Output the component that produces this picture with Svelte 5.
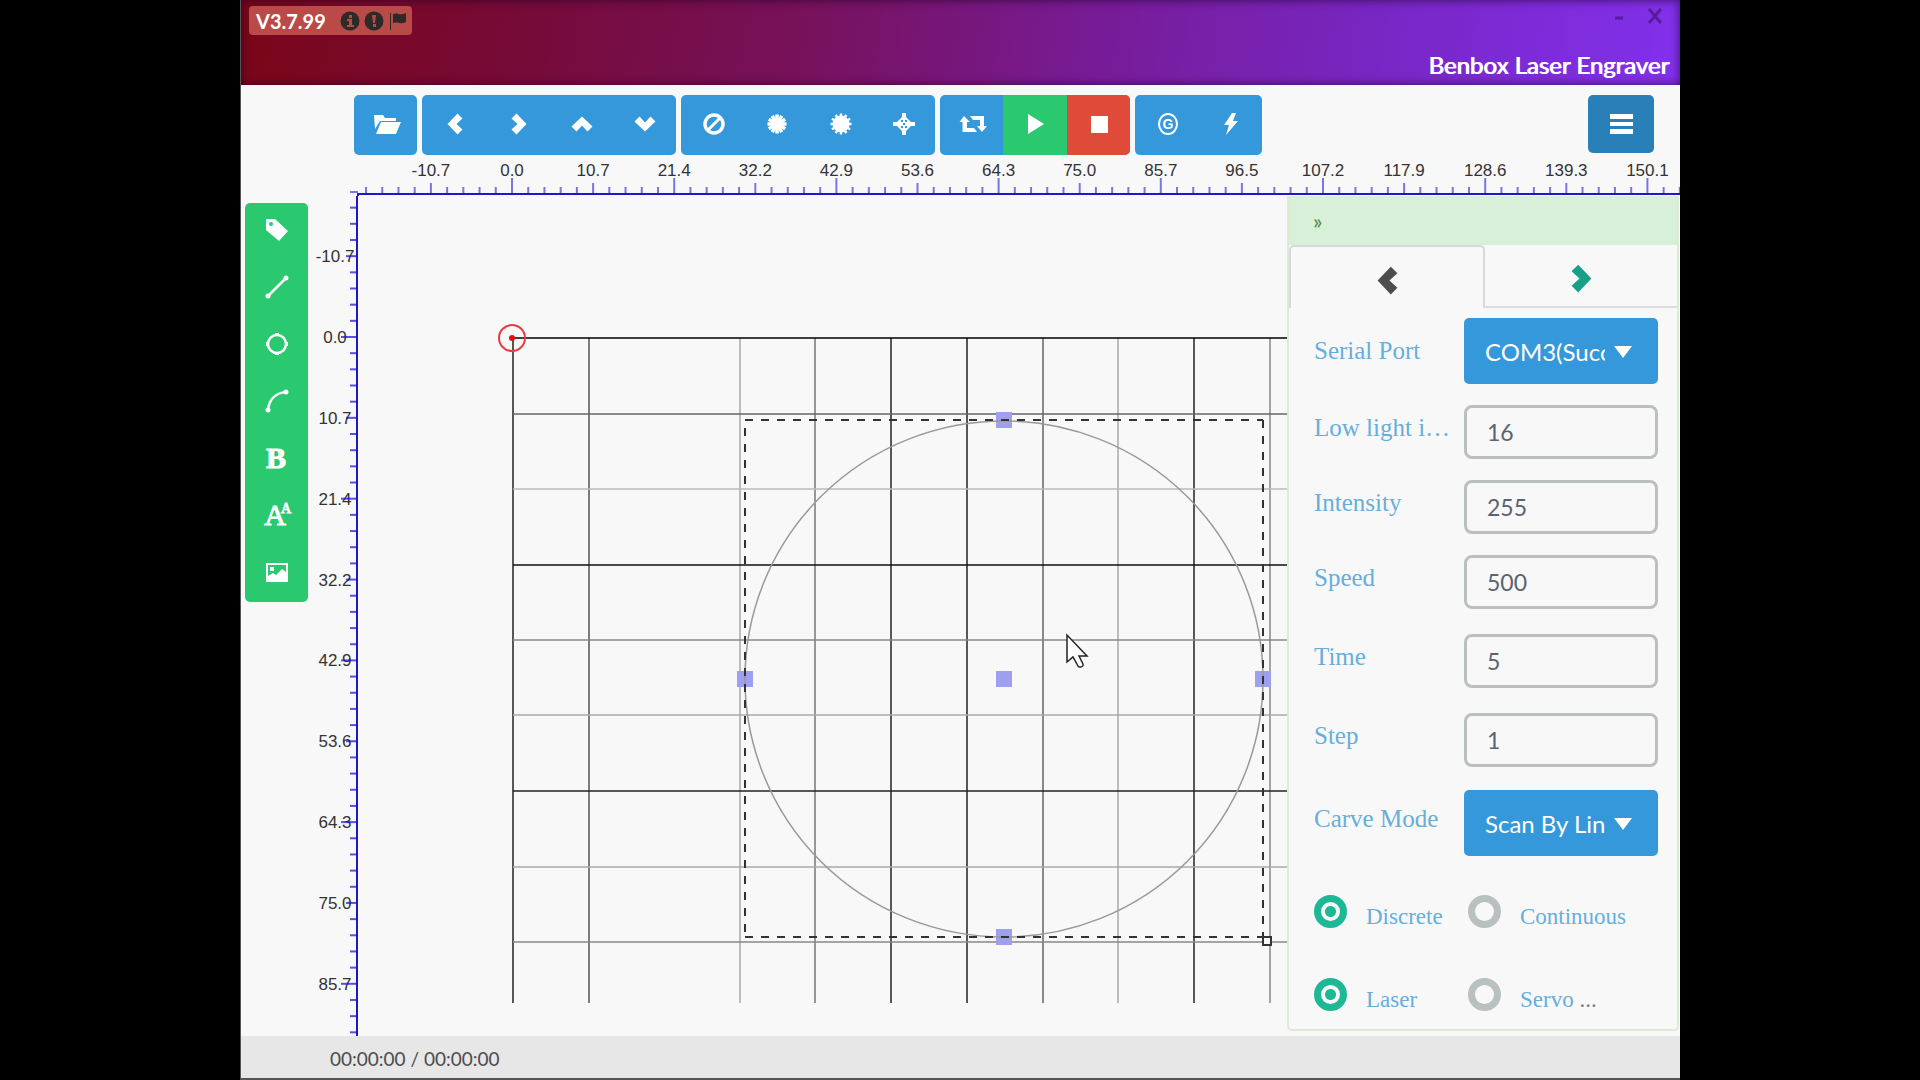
<script lang="ts">
	interface Tool {
		icon: string;
		label: string;
		tone?: string;
	}

	interface Field {
		id: string;
		label: string;
		value: string;
		spaced?: boolean;
	}

	const icons: Record<string, string> = {
		folder: 'M1 5h9l2 3h11v3H7L2 19zM8 12h20l-5 12H3z',
		left: 'M6.5 14 16.5 3.5 21.5 8.5 15.5 14 21.5 19.5 16.5 24.5z',
		right: 'M21.5 14 11.5 3.5 6.5 8.5 12.5 14 6.5 19.5 11.5 24.5z',
		up: 'M14 6.5 24.5 16.5 19.5 21.5 14 15.5 8.5 21.5 3.5 16.5z',
		down: 'M14 21.5 24.5 11.5 19.5 6.5 14 12.5 8.5 6.5 3.5 11.5z',
		repeat: 'M5 6 .5 12h3v10H18l-3-4H8v-6h3zM11 6h14v10h3l-5 6-5-6h3v-6h-7z',
		play: 'M6 4v20l16-10z',
		stop: 'M6 6h17v17H6z',
		bolt: 'M15 3 7 15h5l-3 10 12-14h-5l3-8z',
		menu: 'M3 4h23v5H3zM3 12h23v4H3zM3 19h23v5H3z',
		tag: 'M3 3h9l13 12-9 10L3 14zM6 8a2 2 0 1 0 4 0 2 2 0 1 0-4 0z',
		image: 'M3 5h22v19H3zM5 7v11l5-3 3 2 6-6 4 3V7zM7 9h4v4H7z'
	};

	const groups: Tool[][] = [
		[{ icon: 'folder', label: 'Open' }],
		[
			{ icon: 'left', label: 'Move left' },
			{ icon: 'right', label: 'Move right' },
			{ icon: 'up', label: 'Move up' },
			{ icon: 'down', label: 'Move down' }
		],
		[
			{ icon: 'ban', label: 'Laser off' },
			{ icon: 'asterisk', label: 'Low light' },
			{ icon: 'sun', label: 'Full light' },
			{ icon: 'move', label: 'Preview position' }
		],
		[
			{ icon: 'repeat', label: 'Repeat' },
			{ icon: 'play', label: 'Start', tone: 'green' },
			{ icon: 'stop', label: 'Stop', tone: 'red' }
		],
		[
			{ icon: 'gcode', label: 'G-code' },
			{ icon: 'bolt', label: 'Firmware' }
		]
	];

	const shapes: Tool[] = [
		{ icon: 'tag', label: 'Select' },
		{ icon: 'line', label: 'Line' },
		{ icon: 'circle', label: 'Circle' },
		{ icon: 'arc', label: 'Arc' },
		{ icon: 'bold', label: 'Bold text' },
		{ icon: 'font', label: 'Text' },
		{ icon: 'image', label: 'Image' }
	];

	const spokes = [0, 30, 60, 90, 120, 150];

	// ruler marks, counted from the origin; a label every five ticks
	const TICK_X = 16.22;
	const TICK_Y = 16.17;
	const labels = ['-10.7', '0.0', '10.7', '21.4', '32.2', '42.9', '53.6', '64.3', '75.0', '85.7', '96.5', '107.2', '117.9', '128.6', '139.3', '150.1'];
	const marks = Array.from({ length: 82 }, (_, i) => i - 9);

	const tickSize = (n: number) => (n % 10 === 0 ? 16 : n % 5 === 0 ? 11 : 7);

	const columns = [
		[1, '#222'], [77, '#555'], [228, '#aaa'], [303, '#777'], [379, '#222'],
		[455, '#222'], [531, '#666'], [606, '#aaa'], [682, '#222'], [758, '#888']
	] as const;

	const rows = [
		[0, '#000'], [76, '#666'], [151, '#bbb'], [227, '#111'], [302, '#888'],
		[377, '#aaa'], [453, '#222'], [529, '#aaa'], [604, '#888']
	] as const;

	const handles = [[492, 82], [233, 341], [492, 341], [751, 341], [492, 599]];

	let port = $state('COM3(Success)');
	let carveMode = $state('Scan By Line');
	let motion = $state('discrete');
	let head = $state('laser');

	let fields = $state<Field[]>([
		{ id: 'low-light', label: 'Low light intensity', value: '16' },
		{ id: 'intensity', label: 'Intensity', value: '255' },
		{ id: 'speed', label: 'Speed', value: '500' },
		{ id: 'time', label: 'Time', value: '5', spaced: true },
		{ id: 'step', label: 'Step', value: '1', spaced: true }
	]);
</script>

{#snippet icon(name: string)}
	<svg class="icon" viewBox="0 0 28 28" aria-hidden="true">
		{#if name === 'ban'}
			<circle class="line" cx="14" cy="14" r="9" stroke-width="3.5" />
			<path class="line" d="M8 20 20 8" stroke-width="3" />
		{:else if name === 'asterisk'}
			{#each spokes as angle}
				<path class="line" d="M14 4.5v19" stroke-width="3.5" transform="rotate({angle} 14 14)" />
			{/each}
		{:else if name === 'sun'}
			<circle cx="14" cy="14" r="8.5" />
			{#each spokes as angle}
				<path class="line" d="M14 3.5v21" stroke-width="2.5" transform="rotate({angle} 14 14)" />
			{/each}
		{:else if name === 'move'}
			<path fill-rule="evenodd" d="M12 3h4v4l5 5h4v4h-4l-5 5v4h-4v-4l-5-5H3v-4h4l5-5zM11 10v2h2v-2zM15 10v2h2v-2zM11 16v2h2v-2zM15 16v2h2v-2zM13 13v2h2v-2z" />
		{:else if name === 'gcode'}
			<ellipse class="line" cx="14" cy="14" rx="9" ry="10" stroke-width="2" />
			<text class="g" x="14" y="19" text-anchor="middle">G</text>
		{:else if name === 'line'}
			<path class="line" d="M4 24 24 4" stroke-width="2.5" />
			<circle cx="5" cy="23" r="2.5" />
			<circle cx="23" cy="5" r="2.5" />
		{:else if name === 'circle'}
			<circle class="line" cx="14" cy="14" r="9" stroke-width="2.5" />
			<path d="M12 3h4v3h-4zM12 22h4v3h-4zM3 12h3v4H3zM22 12h3v4h-3z" />
		{:else if name === 'arc'}
			<path class="line" d="M5 23C6 13 12 6 23 5" stroke-width="2.5" />
			<circle cx="5" cy="23" r="2.5" />
			<circle cx="23" cy="5" r="2.5" />
		{:else if name === 'bold'}
			<text class="serif bold" x="13" y="24" text-anchor="middle">B</text>
		{:else if name === 'font'}
			<text class="serif" x="12" y="24" text-anchor="middle">A</text>
			<text class="serif small" x="23" y="12" text-anchor="middle">A</text>
		{:else}
			<path fill-rule="evenodd" d={icons[name]} />
		{/if}
	</svg>
{/snippet}

<div class="app">
	<header>
		<div class="version">
			<strong>V3.7.99</strong>
			<svg width="60" height="20" viewBox="0 0 60 20" aria-hidden="true">
				<circle cx="10" cy="10" r="9.5" />
				<path class="cut" d="M9 4h3v3H9zM7 8h5v6h2v2H7v-2h2v-4H7z" />
				<circle cx="34" cy="10" r="9.5" />
				<path class="cut" d="M32 4h4l-1 8h-2zM33 13h3v3h-3z" />
				<path d="M50 2h1v17h-1zM53 3c5-2 7 2 13-1v9c-5 3-8-1-13 1z" />
			</svg>
		</div>
		<div class="brand">
			<div class="window-buttons">
				<button aria-label="Minimize"><svg width="16" height="16"><path d="M4 10h8" /></svg></button>
				<button aria-label="Close"><svg width="16" height="16"><path d="M2 1 14 15M14 1 2 15" /></svg></button>
			</div>
			<h1>Benbox Laser Engraver</h1>
		</div>
	</header>

	<nav class="toolbar">
		<div class="groups">
			{#each groups as group}
				<div class="group" style:flex-grow={group.length}>
					{#each group as tool}
						<button class={tool.tone} aria-label={tool.label}>{@render icon(tool.icon)}</button>
					{/each}
				</div>
			{/each}
		</div>
		<button class="menu" aria-label="Menu">{@render icon('menu')}</button>
	</nav>

	<svg class="ruler" aria-hidden="true">
		<path class="axis" d="M116 34h2000M117 33v4" />
		<path class="tick" d="M109 32h8" />
		<g transform="translate(271 0)">
			{#each marks as n}
				<path class="tick" d="M{n * TICK_X} {34 - tickSize(n)}V34" />
			{/each}
			{#each labels as text, i}
				<text x={(i - 1) * TICK_X * 5} y="16">{text}</text>
			{/each}
		</g>
	</svg>

	<main>
		<div class="shapes">
			{#each shapes as tool}
				<button aria-label={tool.label}>{@render icon(tool.icon)}</button>
			{/each}
		</div>

		<svg class="canvas" role="img" aria-label="Drawing area">
			<g transform="translate(202 142)">
				{#each labels.slice(0, 10) as text, i}
					<text x="-177" y={(i - 1) * TICK_Y * 5 + 5}>{text}</text>
				{/each}
				<path class="axis" d="M-155-142V698" />
				{#each marks.slice(1, 53) as n}
					<path class="tick" d="M-155 {n * TICK_Y - 1}h{-tickSize(n)}" />
				{/each}

				{#each columns as [x, color]}
					<path class="grid" d="M{x} 0V665" stroke={color} />
				{/each}
				{#each rows as [y, color]}
					<path class="grid" d="M1 {y}H1400" stroke={color} />
				{/each}

				<circle class="origin" r="13" />
				<circle class="dot" r="3" />

				{#each handles as [x, y]}
					<rect class="handle" x={x - 8} y={y - 8} width="16" height="16" />
				{/each}
				<ellipse class="shape" cx="492" cy="341" rx="259" ry="258" />
				<path class="selection" d="M233 82H751M233 599H751M233 90V599M751 82V599" />
				<rect class="resize" x="751" y="599" width="8" height="8" />

				<path class="cursor" d="M555 297v27l6-5 5 9c1 2 6 1 5-2l-4-8h8z" />
			</g>
		</svg>

		<aside>
			<div class="panel-head"><button aria-label="Collapse panel">»</button></div>
			<div class="tabs">
				<button class="active" aria-label="Previous">{@render icon('left')}</button>
				<button aria-label="Next">{@render icon('right')}</button>
			</div>
			<form>
				<div class="row">
					<label class="centered" for="port">Serial Port</label>
					<div class="select">
						<select id="port" bind:value={port}>
							<option>COM3(Success)</option>
						</select>
						<svg width="18" height="12"><path d="M0 0h18L9 12z" /></svg>
					</div>
				</div>
				{#each fields as field}
					<div class={['row', field.spaced && 'spaced']}>
						<label for={field.id}>{field.label}</label>
						<input id={field.id} type="text" bind:value={field.value} />
					</div>
				{/each}
				<div class="row carve">
					<label for="carve">Carve Mode</label>
					<div class="select">
						<select id="carve" bind:value={carveMode}>
							<option>Scan By Line</option>
						</select>
						<svg width="18" height="12"><path d="M0 0h18L9 12z" /></svg>
					</div>
				</div>
				<div class="radios">
					<label><input type="radio" value="discrete" bind:group={motion} /><span>Discrete</span></label>
					<label><input type="radio" value="continuous" bind:group={motion} /><span>Continuous</span></label>
					<label><input type="radio" value="laser" bind:group={head} /><span>Laser</span></label>
					<label><input type="radio" value="servo" bind:group={head} /><span>Servo <i>...</i></span></label>
				</div>
			</form>
		</aside>
	</main>

	<footer>00:00:00 / 00:00:00</footer>
</div>

<style>
	:global(body) {
		background: #000;
	}

	.app {
		box-sizing: border-box;
		width: 75%;
		min-height: 100vh;
		margin: 0 auto;
		display: flex;
		flex-direction: column;
		background: #f8f8f8;
		border-left: 1px solid #555;
		border-bottom: 2px solid #555;
		font-family: Lato, "Liberation Sans", sans-serif;
	}

	button {
		padding: 0;
		border: 0;
		background: none;
		color: inherit;
		font: inherit;
		cursor: pointer;
	}

	header {
		display: flex;
		justify-content: space-between;
		align-items: flex-start;
		height: 85px;
		background: linear-gradient(100deg, #7b0618 0%, #760a35 18%, #771158 38%, #771c98 60%, #7826c2 78%, #8230ec 100%);
		box-shadow: inset 0 0 10px rgba(30, 0, 40, 0.7);
	}

	.version {
		display: flex;
		align-items: center;
		gap: 14px;
		box-sizing: border-box;
		height: 29px;
		margin: 6px 0 0 8px;
		padding: 0 12px 0 7px;
		border-radius: 4px;
		background: #b94a48;
		color: #fff;
		font-size: 20px;
		line-height: 28px;
	}

	.version svg {
		fill: #2d2a2a;
		overflow: visible;
	}

	.version .cut {
		fill: #b94a48;
	}

	.brand {
		display: flex;
		flex-direction: column;
		align-items: flex-end;
		gap: 26px;
		padding: 8px 11px 0 0;
	}

	.window-buttons {
		display: flex;
		gap: 20px;
		padding-right: 6px;
	}

	.window-buttons svg {
		display: block;
		stroke: #561d9c;
		stroke-width: 3;
	}

	h1 {
		margin: 0;
		color: #fff;
		font-size: 24px;
		font-weight: 400;
		line-height: 30px;
		text-shadow: 1px 0 0 #fff;
	}

	.toolbar {
		display: flex;
		justify-content: space-between;
		height: 65px;
		padding: 10px 26px 0 113px;
	}

	.groups {
		display: flex;
		flex: 0 1 908px;
		gap: 5px;
	}

	.group {
		display: flex;
		flex-basis: 0;
		height: 60px;
		border-radius: 5px;
		overflow: hidden;
		background: #3498db;
	}

	.group button {
		flex: 1;
		padding: 0 0 2px 2px;
	}

	.group .green {
		background: #2ac970;
	}

	.group .red {
		background: #e04a39;
	}

	.menu {
		width: 66px;
		height: 58px;
		border-radius: 5px;
		background: #2980b9;
	}

	.toolbar button,
	.shapes button {
		display: flex;
		align-items: center;
		justify-content: center;
	}

	.icon {
		width: 28px;
		height: 28px;
		fill: #fff;
		overflow: visible;
	}

	.icon .line {
		fill: none;
		stroke: #fff;
	}

	.icon .g {
		font: bold 14px "Liberation Sans", sans-serif;
	}

	.icon .serif {
		font: 30px "Liberation Serif", serif;
		stroke: #fff;
	}

	.icon .bold {
		font-weight: bold;
	}

	.icon .small {
		font-size: 14px;
	}

	.ruler {
		display: block;
		width: 100%;
		height: 36px;
	}

	.ruler text,
	.canvas text {
		fill: #333;
		font: 17px "Liberation Sans", sans-serif;
		text-anchor: middle;
	}

	.axis {
		fill: none;
		stroke: #2018c8;
		stroke-width: 2;
	}

	.tick {
		stroke: #1408d8;
		stroke-opacity: 0.55;
		stroke-width: 2;
	}

	.canvas .tick {
		stroke-opacity: 0.7;
	}

	main {
		flex: 1;
		display: flex;
	}

	.shapes {
		display: flex;
		flex-direction: column;
		align-self: flex-start;
		width: 63px;
		margin: 7px 2px 0 4px;
		border-radius: 5px;
		background: #2ac970;
	}

	.shapes button {
		height: 57px;
		padding-bottom: 4px;
	}

	.canvas {
		flex: 1;
		min-width: 0;
	}

	.grid {
		stroke-width: 1.5;
	}

	.origin {
		fill: none;
		stroke: #e83c3c;
		stroke-width: 2;
	}

	.dot {
		fill: #e01010;
	}

	.shape {
		fill: none;
		stroke: #999;
		stroke-width: 1.5;
	}

	.selection {
		fill: none;
		stroke: #333;
		stroke-width: 2;
		stroke-dasharray: 8 8;
	}

	.handle {
		fill: #9f9ff0;
	}

	.resize {
		fill: #f8f8f8;
		stroke: #333;
		stroke-width: 2;
	}

	.cursor {
		fill: #fff;
		stroke: #222;
		stroke-width: 1.5;
	}

	aside {
		display: flex;
		flex-direction: column;
		box-sizing: border-box;
		width: 392px;
		margin: 0 1px 5px 0;
		border: 2px solid #dcebd6;
		border-top: 0;
		border-radius: 0 0 5px 5px;
	}

	.panel-head {
		height: 49px;
		padding-left: 24px;
		background: #d9f0d8;
		color: #4f8a4c;
		font-size: 22px;
		line-height: 49px;
	}

	.tabs {
		display: flex;
		height: 63px;
	}

	.tabs button {
		flex: 1;
		border-bottom: 2px solid #ddd;
	}

	.tabs .active {
		border: 2px solid #d5dad5;
		border-bottom: 0;
		border-radius: 5px 5px 0 0;
	}

	.tabs .icon {
		display: block;
		width: 37px;
		height: 37px;
		margin: 6px auto 0;
		fill: #16a085;
	}

	.tabs .active .icon {
		fill: #4d4d4d;
	}

	form {
		display: flex;
		flex-direction: column;
		gap: 21px;
		padding: 10px 19px 0 25px;
	}

	.row {
		display: grid;
		grid-template-columns: minmax(0, 1fr) 194px;
		column-gap: 12px;
		align-items: center;
	}

	.spaced {
		margin-top: 4px;
	}

	.carve {
		margin-top: 2px;
	}

	.row label {
		padding-bottom: 8px;
		overflow: hidden;
		color: #66aede;
		font: 25px/30px "Liberation Serif", serif;
		text-overflow: ellipsis;
		white-space: nowrap;
	}

	.row .centered {
		padding-bottom: 0;
	}

	.row input {
		box-sizing: border-box;
		width: 100%;
		height: 54px;
		padding: 0 20px;
		border: 3px solid #b9c0be;
		border-radius: 8px;
		background: #f8f8f8;
		color: #5a6372;
		font: 23px Lato, sans-serif;
	}

	.select {
		display: grid;
		align-items: center;
	}

	.select select {
		grid-area: 1 / 1;
		width: 100%;
		height: 66px;
		padding: 0 53px 0 21px;
		border: 0;
		border-radius: 5px;
		appearance: none;
		background: #3498db;
		color: #fff;
		font: 24px Lato, sans-serif;
	}

	.select svg {
		grid-area: 1 / 1;
		justify-self: end;
		margin: 2px 26px 0 0;
		fill: #fff;
		pointer-events: none;
	}

	.radios {
		display: grid;
		grid-template-columns: 154px 1fr;
		row-gap: 49px;
		margin-top: 18px;
	}

	.radios label {
		display: flex;
		gap: 19px;
		height: 34px;
		color: #66aede;
		font: 23px/44px "Liberation Serif", serif;
		white-space: nowrap;
	}

	.radios i {
		color: #777;
		font-style: normal;
	}

	.radios input {
		flex: none;
		width: 33px;
		height: 33px;
		margin: 0;
		border: 7px solid #b9c0c0;
		border-radius: 50%;
		appearance: none;
	}

	.radios input:checked {
		border-color: #1fb896;
		background: radial-gradient(circle, #1fb896 5px, #f8f8f8 6px);
	}

	footer {
		height: 42px;
		padding-left: 89px;
		background: #e7e7e7;
		color: #4c4c4c;
		font-size: 19px;
		line-height: 46px;
	}
</style>
